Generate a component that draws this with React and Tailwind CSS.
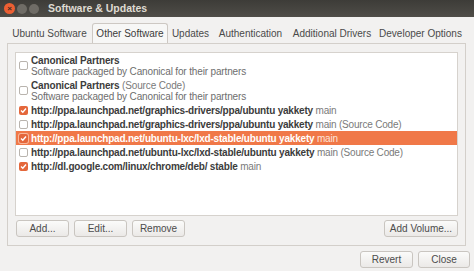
import React from "react";

const sources = [
  { kind: "two", title: "Canonical Partners", extra: "", sub: "Software packaged by Canonical for their partners", checked: false },
  { kind: "two", title: "Canonical Partners", extra: "(Source Code)", sub: "Software packaged by Canonical for their partners", checked: false },
  { kind: "one", url: "http://ppa.launchpad.net/graphics-drivers/ppa/ubuntu yakkety", rest: "main", checked: true },
  { kind: "one", url: "http://ppa.launchpad.net/graphics-drivers/ppa/ubuntu yakkety", rest: "main (Source Code)", checked: false },
  { kind: "one", url: "http://ppa.launchpad.net/ubuntu-lxc/lxd-stable/ubuntu yakkety", rest: "main", checked: true, selected: true },
  { kind: "one", url: "http://ppa.launchpad.net/ubuntu-lxc/lxd-stable/ubuntu yakkety", rest: "main (Source Code)", checked: false },
  { kind: "one", url: "http://dl.google.com/linux/chrome/deb/ stable", rest: "main", checked: true },
];

const tabs = [
  { label: "Ubuntu Software", w: "w-[85px]" },
  { label: "Other Software", w: "w-[76px]", active: true },
  { label: "Updates", w: "w-[45px]" },
  { label: "Authentication", w: "w-[75px]" },
  { label: "Additional Drivers", w: "w-[88px]" },
  { label: "Developer Options", w: "w-[89px]" },
];

function Check({ on, selected }) {
  if (on) {
    return (
      <span className={`flex h-[9px] w-[9px] shrink-0 items-center justify-center rounded-[2px] bg-[#e4673b] ${selected ? "ring-1 ring-[#f8b79a]" : ""}`}>
        <svg width="7" height="7" viewBox="0 0 7 7">
          <path d="M1 3.6 L2.8 5.3 L6 1.5" fill="none" stroke="#fff" strokeWidth="1.4" />
        </svg>
      </span>
    );
  }
  return <span className="h-[9px] w-[9px] shrink-0 rounded-[2px] border border-[#b9b4ae] bg-white" />;
}

function Btn({ children, w }) {
  return (
    <div className={`flex h-[17px] ${w} items-center justify-center rounded-[3px] border border-[#c9c5c0] bg-gradient-to-b from-[#fbfbfa] to-[#ebe9e7] text-[10px] text-[#4c4c4c]`}>
      {children}
    </div>
  );
}

export default function App() {
  return (
    <div className="flex h-[271px] w-[474px] flex-col bg-[#f2f1f0] text-[#3c3c3c]" style={{ fontFamily: '"Liberation Sans", Arial, sans-serif' }}>
      <div className="flex h-[17px] items-center bg-gradient-to-b from-[#3d3c38] to-[#4f4d48] pl-[4px]">
        <span className="flex h-[11px] w-[11px] items-center justify-center rounded-full bg-[#ec5f33] text-[8px] font-bold leading-none text-[#3c2a22]">×</span>
        <span className="ml-[2px] h-[10px] w-[10px] rounded-full bg-[#6f6c66]" />
        <span className="ml-[2px] h-[10px] w-[10px] rounded-full bg-[#6f6c66]" />
        <span className="ml-[9px] text-[10.5px] font-bold text-[#dfdbd2]">Software &amp; Updates</span>
      </div>

      <div className="flex flex-1 flex-col px-[7px] pt-[6px]">
        <div className="flex h-[20px] items-end">
          {tabs.map((t) => (
            <div
              key={t.label}
              className={`flex h-[20px] items-center justify-center text-[10px] ${t.w} ${
                t.active ? "rounded-t-[3px] border border-b-0 border-[#cdc8c3] bg-[#f7f7f6] text-[#3c3c3c]" : "text-[#4a4a4a]"
              }`}
            >
              {t.label}
            </div>
          ))}
        </div>

        <div className="flex h-[203px] w-[459px] flex-col border border-[#d3cfca] px-[7px] pb-[8px] pt-[8px]">
          <div className="h-[165px] border border-[#d6d2cd] bg-white">
            {sources.map((s, i) =>
              s.kind === "two" ? (
                <div key={i} className="flex h-[25px] items-center pl-[3px]">
                  <Check on={s.checked} />
                  <div className="ml-[3px] flex flex-col leading-[11px] tracking-[-0.15px]">
                    <span className="text-[10px]">
                      <b className="font-bold">{s.title}</b>
                      {s.extra && <span className="text-[#7a7a7a]"> {s.extra}</span>}
                    </span>
                    <span className="text-[10px] text-[#6e6e6e]">{s.sub}</span>
                  </div>
                </div>
              ) : (
                <div key={i} className={`flex h-[14px] items-center pl-[3px] ${s.selected ? "bg-[#f07848] text-white" : ""}`}>
                  <Check on={s.checked} selected={s.selected} />
                  <span className="ml-[3px] whitespace-nowrap text-[10px] tracking-[-0.2px]">
                    <b className="font-bold">{s.url}</b>{" "}
                    <span className={s.selected ? "text-[#fde4d8]" : "text-[#7a7a7a]"}>{s.rest}</span>
                  </span>
                </div>
              )
            )}
          </div>
          <div className="mt-[4px] flex gap-[5px] pl-[1px]">
            <Btn w="w-[53px]">Add...</Btn>
            <Btn w="w-[53px]">Edit...</Btn>
            <Btn w="w-[53px]">Remove</Btn>
            <div className="ml-auto">
              <Btn w="w-[74px]">Add Volume...</Btn>
            </div>
          </div>
        </div>

        <div className="mt-[5px] flex justify-end gap-[5px]">
          <Btn w="w-[53px]">Revert</Btn>
          <div className="-mr-[3px]">
            <Btn w="w-[52px]">Close</Btn>
          </div>
        </div>
      </div>
    </div>
  );
}
